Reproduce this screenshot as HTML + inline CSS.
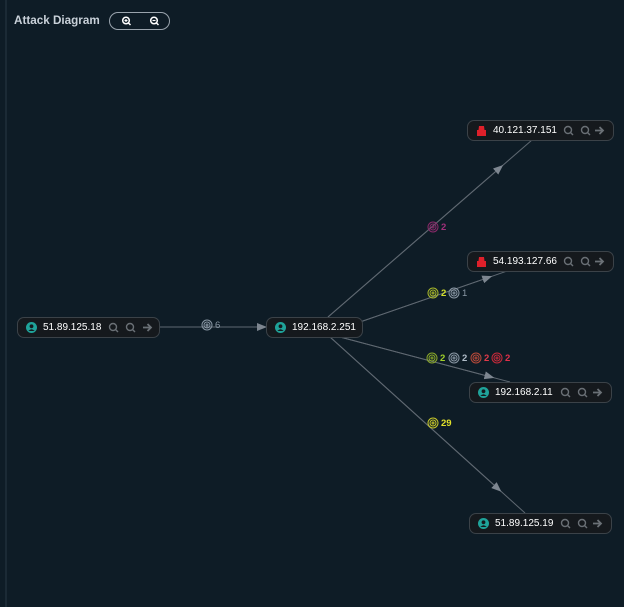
<!DOCTYPE html>
<html><head><style>
body{margin:0;width:624px;height:607px;background:#0e1c26;font-family:"Liberation Sans",sans-serif;position:relative;overflow:hidden}
.vl{position:absolute;left:5px;top:0;width:2px;height:607px;background:#1b2a35}
.title{position:absolute;left:14px;top:14px;color:#c9d1d9;font-size:11.7px;font-weight:bold}
.zb{position:absolute;left:109px;top:12px;width:59px;height:16px;border:1px solid #9aa4ad;border-radius:9px}
.node{position:absolute;height:19px;background:#15191d;border:1px solid #3b4248;border-radius:7px;color:#fff;font-size:10px;line-height:19px}
.node .ic{position:absolute;left:8px;top:4px}
.node .t{position:absolute;left:25px;top:0}
.node .acts{position:absolute;top:4px}
.lbl{position:absolute;font-size:9.5px;font-weight:bold}
</style></head><body>
<div class="vl"></div>
<div class="title">Attack Diagram</div>
<div class="zb">
<svg width="59" height="16" style="position:absolute;left:0;top:0">
<g stroke="#fff" stroke-width="1.5" fill="none"><circle cx="16" cy="7.5" r="3.3"/><line x1="18.5" y1="10" x2="20.5" y2="12"/><line x1="14.5" y1="7.5" x2="17.5" y2="7.5" stroke-width="1.1"/><line x1="16" y1="6" x2="16" y2="9" stroke-width="1.1"/>
<circle cx="44" cy="7.5" r="3.3"/><line x1="46.5" y1="10" x2="48.5" y2="12"/><line x1="42.5" y1="7.5" x2="45.5" y2="7.5" stroke-width="1.1"/></g></svg></div>

<svg width="624" height="607" style="position:absolute;left:0;top:0">
<defs><marker id="a" markerWidth="10" markerHeight="8" refX="5" refY="4" orient="auto" markerUnits="userSpaceOnUse"><path d="M0,0 L10,4 L0,8 Z" fill="#7d8690"/></marker></defs>
<g stroke="#5f6871" stroke-width="1" fill="none">
<path d="M159,327 L266,327"/><path d="M160,327 L262,327" marker-end="url(#a)"/>
<path d="M328,317 L532,140"/><path d="M328,317 L499.4,168.3" marker-end="url(#a)"/>
<path d="M360,322 L510,270"/><path d="M360,322 L487.5,277.8" marker-end="url(#a)"/>
<path d="M340,337 L510,382"/><path d="M340,337 L489.6,376.6" marker-end="url(#a)"/>
<path d="M330,337 L525,513"/><path d="M330,337 L497.7,488.4" marker-end="url(#a)"/>
</g>
<g fill="none" stroke-width="1">
<g stroke="#8a98a5"><circle cx="207" cy="325" r="5"/><circle cx="207" cy="325" r="3"/><circle cx="207" cy="325" r="1"/></g>
<g stroke="#8a2a6a"><circle cx="433" cy="227" r="5"/><circle cx="433" cy="227" r="3"/><circle cx="433" cy="227" r="1"/></g>
<g stroke="#a8b82a"><circle cx="433" cy="293" r="5"/><circle cx="433" cy="293" r="3"/><circle cx="433" cy="293" r="1"/></g>
<g stroke="#8a98a5"><circle cx="454" cy="293" r="5"/><circle cx="454" cy="293" r="3"/><circle cx="454" cy="293" r="1"/></g>
<g stroke="#8aa82a"><circle cx="432" cy="358" r="5"/><circle cx="432" cy="358" r="3"/><circle cx="432" cy="358" r="1"/></g>
<g stroke="#8a98a5"><circle cx="454" cy="358" r="5"/><circle cx="454" cy="358" r="3"/><circle cx="454" cy="358" r="1"/></g>
<g stroke="#b84a3a"><circle cx="476" cy="358" r="5"/><circle cx="476" cy="358" r="3"/><circle cx="476" cy="358" r="1"/></g>
<g stroke="#c82a3a"><circle cx="497" cy="358" r="5"/><circle cx="497" cy="358" r="3"/><circle cx="497" cy="358" r="1"/></g>
<g stroke="#c8c82a"><circle cx="433" cy="423" r="5"/><circle cx="433" cy="423" r="3"/><circle cx="433" cy="423" r="1"/></g>
</g>
</svg>
<div class="lbl" style="left:215px;top:320px;color:#8a98a5;font-weight:normal">6</div>
<div class="lbl" style="left:441px;top:222px;color:#a0307a">2</div>
<div class="lbl" style="left:441px;top:288px;color:#d4e02a">2</div>
<div class="lbl" style="left:462px;top:288px;color:#8a98a5;font-weight:normal">1</div>
<div class="lbl" style="left:440px;top:353px;color:#a0d02a">2</div>
<div class="lbl" style="left:462px;top:353px;color:#b0bcc8">2</div>
<div class="lbl" style="left:484px;top:353px;color:#e03a4a">2</div>
<div class="lbl" style="left:505px;top:353px;color:#e0304a">2</div>
<div class="lbl" style="left:441px;top:418px;color:#e0e02a">29</div>

<div class="node" style="left:17px;top:317px;width:141px"><svg class="ic" width="11" height="11"><circle cx="5.5" cy="5.5" r="5.5" fill="#1fa39a"/><circle cx="5.5" cy="4.3" r="1.9" fill="#15191d"/><path d="M2.3,9 Q5.5,5.5 8.7,9" fill="#15191d"/></svg><span class="t">51.89.125.18</span><svg class="acts" style="left:90px" width="48" height="11"><g stroke="#6a7076" stroke-width="1.4" fill="none"><circle cx="5" cy="5" r="3.5"/><line x1="7.5" y1="7.5" x2="10" y2="10"/><circle cx="22" cy="5" r="3.5"/><line x1="24.5" y1="7.5" x2="27" y2="10"/><path d="M35,5.5 H43 M39.5,2 L43,5.5 L39.5,9" stroke-width="1.8"/></g></svg></div>

<div class="node" style="left:266px;top:317px;width:95px"><svg class="ic" width="11" height="11"><circle cx="5.5" cy="5.5" r="5.5" fill="#1fa39a"/><circle cx="5.5" cy="4.3" r="1.9" fill="#15191d"/><path d="M2.3,9 Q5.5,5.5 8.7,9" fill="#15191d"/></svg><span class="t">192.168.2.251</span></div>

<div class="node" style="left:467px;top:120px;width:145px"><svg class="ic" width="11" height="11"><path d="M3,1 H8 L8.5,5 H10 L10,11 H1 L1,5 H2.5 Z" fill="#e0202a"/></svg><span class="t">40.121.37.151</span><svg class="acts" style="left:95px" width="48" height="11"><g stroke="#6a7076" stroke-width="1.4" fill="none"><circle cx="5" cy="5" r="3.5"/><line x1="7.5" y1="7.5" x2="10" y2="10"/><circle cx="22" cy="5" r="3.5"/><line x1="24.5" y1="7.5" x2="27" y2="10"/><path d="M32,5.5 H40 M36.5,2 L40,5.5 L36.5,9" stroke-width="1.8"/></g></svg></div>

<div class="node" style="left:467px;top:251px;width:145px"><svg class="ic" width="11" height="11"><path d="M3,1 H8 L8.5,5 H10 L10,11 H1 L1,5 H2.5 Z" fill="#e0202a"/></svg><span class="t">54.193.127.66</span><svg class="acts" style="left:95px" width="48" height="11"><g stroke="#6a7076" stroke-width="1.4" fill="none"><circle cx="5" cy="5" r="3.5"/><line x1="7.5" y1="7.5" x2="10" y2="10"/><circle cx="22" cy="5" r="3.5"/><line x1="24.5" y1="7.5" x2="27" y2="10"/><path d="M32,5.5 H40 M36.5,2 L40,5.5 L36.5,9" stroke-width="1.8"/></g></svg></div>

<div class="node" style="left:469px;top:382px;width:141px"><svg class="ic" width="11" height="11"><circle cx="5.5" cy="5.5" r="5.5" fill="#1fa39a"/><circle cx="5.5" cy="4.3" r="1.9" fill="#15191d"/><path d="M2.3,9 Q5.5,5.5 8.7,9" fill="#15191d"/></svg><span class="t">192.168.2.11</span><svg class="acts" style="left:90px" width="48" height="11"><g stroke="#6a7076" stroke-width="1.4" fill="none"><circle cx="5" cy="5" r="3.5"/><line x1="7.5" y1="7.5" x2="10" y2="10"/><circle cx="22" cy="5" r="3.5"/><line x1="24.5" y1="7.5" x2="27" y2="10"/><path d="M33,5.5 H41 M37.5,2 L41,5.5 L37.5,9" stroke-width="1.8"/></g></svg></div>

<div class="node" style="left:469px;top:513px;width:141px"><svg class="ic" width="11" height="11"><circle cx="5.5" cy="5.5" r="5.5" fill="#1fa39a"/><circle cx="5.5" cy="4.3" r="1.9" fill="#15191d"/><path d="M2.3,9 Q5.5,5.5 8.7,9" fill="#15191d"/></svg><span class="t">51.89.125.19</span><svg class="acts" style="left:90px" width="48" height="11"><g stroke="#6a7076" stroke-width="1.4" fill="none"><circle cx="5" cy="5" r="3.5"/><line x1="7.5" y1="7.5" x2="10" y2="10"/><circle cx="22" cy="5" r="3.5"/><line x1="24.5" y1="7.5" x2="27" y2="10"/><path d="M33,5.5 H41 M37.5,2 L41,5.5 L37.5,9" stroke-width="1.8"/></g></svg></div>
</body></html>
